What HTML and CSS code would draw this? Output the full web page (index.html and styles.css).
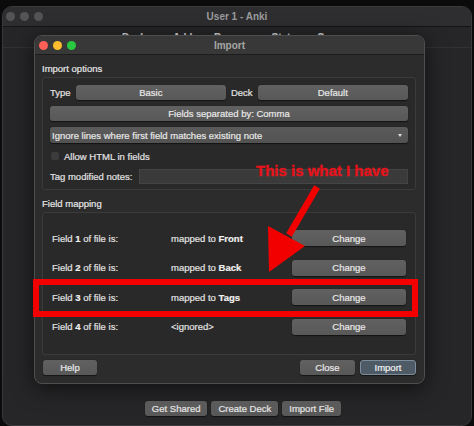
FILE: index.html
```html
<!DOCTYPE html>
<html>
<head>
<meta charset="utf-8">
<link rel="stylesheet" href="styles.css">
</head>
<body>
<div class="desk">
  <div class="mainwin">
    <div class="mtitle">
      <div class="lights"><span class="dot gray"></span><span class="dot gray"></span><span class="dot gray"></span></div>
      <div class="wtitle">User 1 - Anki</div>
      <div></div>
    </div>
    <div class="toolbar"><span>Decks</span><span>Add</span><span>Browse</span><span>Stats</span><span>Sync</span></div>
    <div class="mbody"></div>
    <div class="mbottom">
      <div class="btn mbtn">Get Shared</div>
      <div class="btn mbtn">Create Deck</div>
      <div class="btn mbtn">Import File</div>
    </div>
  </div>

  <div class="dialog">
    <div class="dtitle">
      <div class="lights dlights"><span class="dot red"></span><span class="dot yellow"></span><span class="dot green"></span></div>
      <div class="wtitle dtitle-text">Import</div>
      <div></div>
    </div>
    <div class="dbody">
      <div class="glabel">Import options</div>
      <div class="group opts">
        <div class="row r1">
          <span class="lbl">Type</span>
          <div class="btn">Basic</div>
          <span class="lbl">Deck</span>
          <div class="btn">Default</div>
        </div>
        <div class="btn r2">Fields separated by: Comma</div>
        <div class="combo r3"><span>Ignore lines where first field matches existing note</span><span class="caret"></span></div>
        <div class="check r4"><span class="box"></span><span>Allow HTML in fields</span></div>
        <div class="tagrow r5"><span class="tag-label">Tag modified notes:</span><div class="input"></div></div>
      </div>
      <div class="glabel gl2">Field mapping</div>
      <div class="group maps">
        <div class="maprow"><span>Field <b>1</b> of file is:</span><span>mapped to <b>Front</b></span><div class="btn">Change</div></div>
        <div class="maprow"><span>Field <b>2</b> of file is:</span><span>mapped to <b>Back</b></span><div class="btn">Change</div></div>
        <div class="maprow"><span>Field <b>3</b> of file is:</span><span>mapped to <b>Tags</b></span><div class="btn">Change</div></div>
        <div class="maprow"><span>Field <b>4</b> of file is:</span><span>&lt;ignored&gt;</span><div class="btn">Change</div></div>
      </div>
      <div class="dbottom">
        <div class="btn help">Help</div>
        <div class="spacer"></div>
        <div class="btn close">Close</div>
        <div class="btn import">Import</div>
      </div>
    </div>
  </div>

  <div class="annot-box"></div>
  <div class="annot-text">This is what I have</div>
  <svg class="annot-arrow" width="70" height="100" viewBox="0 0 70 100">
    <line x1="57" y1="6" x2="29" y2="54" stroke="#f20000" stroke-width="6.5" stroke-linecap="butt"/>
    <polygon points="8,45 45,65 9,91" fill="#f20000"/>
  </svg>
</div>
</body>
</html>
```

FILE: styles.css
```css
* { box-sizing: border-box; }
html, body { margin: 0; padding: 0; }
body {
  width: 474px;
  height: 426px;
  overflow: hidden;
  background: #0b0b0b;
  font-family: "Liberation Sans", Arial, sans-serif;
  font-size: 9.5px;
  color: #e2e2e2;
  -webkit-text-stroke: 0.2px currentColor;
}
.desk {
  position: relative;
  width: 474px;
  height: 426px;
  padding: 6px 2px 0 2px;
}
.mainwin {
  width: 470px;
  height: 420px;
  background: #262628;
  border: 1px solid #3a3a3c;
  border-radius: 10px;
  display: flex;
  flex-direction: column;
  overflow: hidden;
}
.mtitle {
  height: 20px;
  background: #2e2e30;
  border-bottom: 1px solid #141414;
  display: grid;
  grid-template-columns: 1fr auto 1fr;
  align-items: center;
}
.lights {
  display: flex;
  gap: 5px;
  padding-left: 3px;
}
.dot {
  width: 9px;
  height: 9px;
  border-radius: 50%;
  display: block;
}
.gray { background: #545456; }
.red { background: #fe5f57; }
.yellow { background: #febc2e; }
.green { background: #28c840; }
.wtitle {
  font-size: 10px;
  font-weight: bold;
  color: #9c9c9e;
  -webkit-text-stroke: 0;
}
.toolbar {
  height: 21px;
  display: flex;
  gap: 21.5px;
  padding: 5px 0 0 119px;
  font-size: 10px;
  font-weight: bold;
  color: #dcdcdc;
  border-bottom: 1px solid #323234;
}
.mbody { flex: 1; }
.mbottom {
  display: flex;
  justify-content: center;
  gap: 4px;
  padding: 0 0 9px 12px;
}
.btn {
  height: 15px;
  background: linear-gradient(#616161, #585858);
  border-radius: 3px;
  color: #e8e8e8;
  display: flex;
  align-items: center;
  justify-content: center;
  white-space: nowrap;
  box-shadow: 0 0.5px 1px rgba(0,0,0,0.55);
}
.mbtn { padding: 0 7px; }

.dialog {
  position: absolute;
  left: 34px;
  top: 35px;
  width: 391px;
  background: #2c2c2c;
  border: 1px solid #4e4e4e;
  border-radius: 8px;
  overflow: hidden;
  box-shadow: 0 4px 22px rgba(0,0,0,0.6);
}
.dtitle {
  height: 19px;
  background: #383838;
  border-bottom: 1px solid #1d1d1d;
  display: grid;
  grid-template-columns: 1fr auto 1fr;
  align-items: center;
}
.dlights { padding-left: 4px; }
.dtitle-text { color: #a6a6a6; }
.dbody {
  padding: 8px 8px 8px 7px;
  display: flex;
  flex-direction: column;
}
.glabel {
  height: 12px;
  line-height: 12px;
  color: #e6e6e6;
}
.gl2 { margin-top: 8px; }
.group {
  margin-top: 2px;
  background: #292929;
  border: 1px solid #3b3b3b;
  border-radius: 3px;
}
.opts {
  padding: 7px 7px 5px 7px;
  display: flex;
  flex-direction: column;
  gap: 6px;
}
.row.r1 {
  height: 15px;
  display: grid;
  grid-template-columns: auto 1fr auto 1fr;
  gap: 5px;
  align-items: center;
}
.r1 .btn { height: 15px; }
.r2 { height: 15px; }
.combo {
  height: 16px;
  background: linear-gradient(#5a5a5a, #525252);
  border-radius: 3px;
  display: flex;
  align-items: center;
  justify-content: space-between;
  padding: 0 6px 0 2px;
  color: #e8e8e8;
  box-shadow: 0 0.5px 1px rgba(0,0,0,0.55);
}
.caret {
  width: 0;
  height: 0;
  border-left: 2.5px solid transparent;
  border-right: 2.5px solid transparent;
  border-top: 3px solid #dcdcdc;
  -webkit-text-stroke: 0;
}
.check {
  height: 14px;
  display: flex;
  align-items: center;
  gap: 5px;
  padding-left: 1px;
}
.box {
  width: 8px;
  height: 8px;
  background: #3c3c3c;
  border-radius: 2px;
}
.tagrow {
  height: 15px;
  display: flex;
  align-items: center;
}
.tag-label { width: 89px; }
.input {
  flex: 1;
  height: 15px;
  background: #3a3a3a;
  border: 1px solid #444;
}
.maps {
  padding: 17px 9px 19.5px 9px;
  display: flex;
  flex-direction: column;
  gap: 13.5px;
}
.maprow {
  height: 16px;
  display: grid;
  grid-template-columns: 119px 1fr 114px;
  align-items: center;
}
.maprow .btn { height: 16px; }
.maprow b { font-weight: bold; color: #f0f0f0; }
.dbottom {
  margin-top: 5px;
  height: 15px;
  display: flex;
  gap: 5px;
}
.spacer { flex: 1; }
.help { width: 54px; margin-left: 1px; }
.close { width: 55px; }
.import {
  width: 56px;
  background: #4e5a65;
  border: 1px solid #7d8c9b;
  color: #f2f2f2;
}

.annot-box {
  position: absolute;
  left: 33px;
  top: 279px;
  width: 385px;
  height: 38px;
  border: 6px solid #f50000;
}
.annot-text {
  position: absolute;
  left: 256px;
  top: 162px;
  font-size: 15px;
  font-weight: bold;
  color: #e8121a;
  white-space: nowrap;
  -webkit-text-stroke: 0.3px currentColor;
}
.annot-arrow {
  position: absolute;
  left: 260px;
  top: 181px;
}
```
